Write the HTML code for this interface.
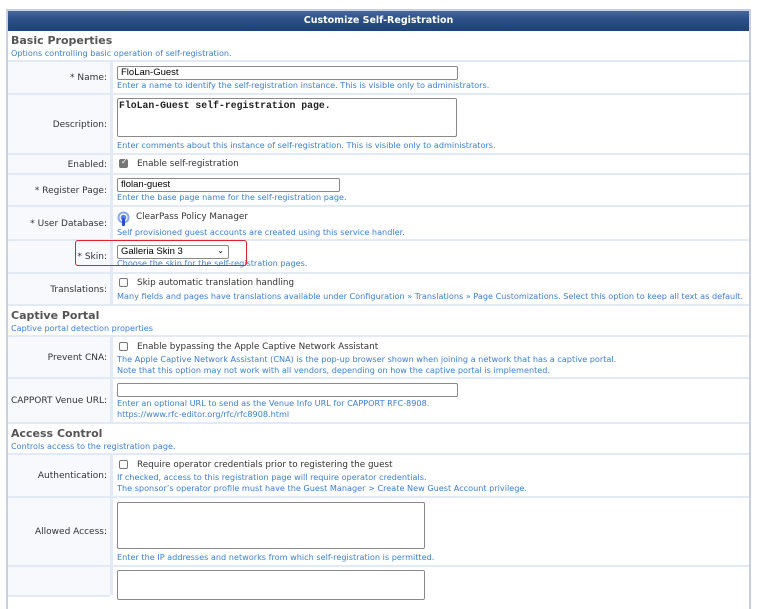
<!DOCTYPE html>
<html><head><style>
*{box-sizing:border-box;margin:0;padding:0}
body{width:768px;height:586px;background:#fff;position:relative;overflow:hidden;font-family:"DejaVu Sans",Verdana,sans-serif;color:#333}
.frame{position:absolute;left:6px;top:9px;width:745px;height:600px;border:2px solid #c8cfe0;border-bottom:none;background:#fff}
.hdr{position:absolute;left:8px;top:11px;width:741px;height:20px;background:linear-gradient(#45679a,#2d5088 40%,#1d4377);color:#fff;font-weight:bold;font-size:9.5px;text-align:center;line-height:20px}
.sec{position:absolute;left:8px;width:741px;background:#fff;border-bottom:2px solid #e2eaf8}
.sec b{position:absolute;left:3px;top:3px;font-size:11px;color:#555}
.sec i{position:absolute;left:3px;top:17px;font-style:normal;font-size:8.1px;color:#3a7fd5}
.lab{position:absolute;left:8px;width:102px;background:#f7f9fd;border-bottom:2px solid #e2eaf8;font-size:9px;color:#333;text-align:right;padding-right:3px;white-space:nowrap}
.val{position:absolute;left:113px;width:636px;background:#fff;border-bottom:2px solid #e2eaf8}
.t{position:absolute;font-size:8.8px;color:#333;white-space:nowrap}
.h{position:absolute;left:117px;font-size:8.15px;color:#3a7fd5;white-space:nowrap;line-height:11px}
.in{position:absolute;left:117px;border:1px solid #8a8a8a;border-radius:2px;background:#fff;font-family:"Liberation Sans",sans-serif;font-size:9.5px;color:#000;padding-left:3px;line-height:12px}
.ta{position:absolute;left:117px;border:1px solid #8a8a8a;border-radius:2px;background:#fff}
.cb{position:absolute;left:119px;width:9px;height:9px;border:1px solid #777;border-radius:2px;background:#fff}
.sep{position:absolute;left:110px;width:3px;background:#e2eaf8}
</style></head><body>
<div class="frame"></div>
<div class="hdr">Customize Self-Registration</div>

<div class="sec" style="top:31px;height:31px"><b>Basic Properties</b><i>Options controlling basic operation of self-registration.</i></div>

<div class="lab" style="top:62px;height:33px;line-height:33px">* Name:</div>
<div class="lab" style="top:95px;height:60px;line-height:60px">Description:</div>
<div class="lab" style="top:155px;height:20px;line-height:20px">Enabled:</div>
<div class="lab" style="top:175px;height:32px;line-height:32px">* Register Page:</div>
<div class="lab" style="top:207px;height:34px;line-height:34px">* User Database:</div>
<div class="lab" style="top:241px;height:33px;line-height:33px">* Skin:</div>
<div class="lab" style="top:274px;height:32px;line-height:32px">Translations:</div>
<div class="sep" style="top:62px;height:244px"></div>
<div class="val" style="top:62px;height:33px"></div>
<div class="val" style="top:95px;height:60px"></div>
<div class="val" style="top:155px;height:20px"></div>
<div class="val" style="top:175px;height:32px"></div>
<div class="val" style="top:207px;height:34px"></div>
<div class="val" style="top:241px;height:33px"></div>
<div class="val" style="top:274px;height:32px"></div>

<div class="in" style="top:66px;width:341px;height:14px">FloLan-Guest</div>
<div class="h" style="top:80px">Enter a name to identify the self-registration instance. This is visible only to administrators.</div>
<div class="ta" style="top:98px;width:340px;height:39px"><span style="position:absolute;left:1px;top:1px;font-family:'Liberation Mono',monospace;font-weight:bold;font-size:9.8px;color:#222">FloLan-Guest self-registration page.</span></div>
<div class="h" style="top:140px">Enter comments about this instance of self-registration. This is visible only to administrators.</div>
<div class="cb" style="top:159px;background:#777"><span style="position:absolute;left:1px;top:-3px;color:#fff;font-size:8px">✓</span></div>
<div class="t" style="left:137px;top:159px">Enable self-registration</div>
<div class="in" style="top:178px;width:223px;height:14px">flolan-guest</div>
<div class="h" style="top:192px">Enter the base page name for the self-registration page.</div>
<svg style="position:absolute;left:117px;top:211px" width="13" height="15" viewBox="0 0 13 15"><circle cx="6.5" cy="6.5" r="6" fill="#8aa8f0"/><circle cx="6.5" cy="6.5" r="4" fill="#fff"/><circle cx="6.5" cy="6.5" r="2.8" fill="#5a7ee8"/><rect x="5" y="7" width="3" height="8" rx="1" fill="#2a4fd0"/></svg>
<div class="t" style="left:136px;top:212px">ClearPass Policy Manager</div>
<div class="h" style="top:227px">Self provisioned guest accounts are created using this service handler.</div>
<div class="in" style="top:245px;width:112px;height:14px">Galleria Skin 3<span style="position:absolute;right:4px;top:-1px;font-size:8px">⌄</span></div>
<div class="h" style="top:258px">Choose the skin for the self-registration pages.</div>
<div style="position:absolute;left:75px;top:240px;width:172px;height:26px;border:1.5px solid #e0202a;border-radius:3px"></div>
<div class="cb" style="top:278px"></div>
<div class="t" style="left:137px;top:278px">Skip automatic translation handling</div>
<div class="h" style="top:291px">Many fields and pages have translations available under Configuration » Translations » Page Customizations. Select this option to keep all text as default.</div>

<div class="sec" style="top:306px;height:31px"><b>Captive Portal</b><i>Captive portal detection properties</i></div>
<div class="lab" style="top:337px;height:42px;line-height:42px">Prevent CNA:</div>
<div class="lab" style="top:379px;height:45px;line-height:45px">CAPPORT Venue URL:</div>
<div class="sep" style="top:337px;height:87px"></div>
<div class="val" style="top:337px;height:42px"></div>
<div class="val" style="top:379px;height:45px"></div>
<div class="cb" style="top:342px"></div>
<div class="t" style="left:137px;top:342px">Enable bypassing the Apple Captive Network Assistant</div>
<div class="h" style="top:354px">The Apple Captive Network Assistant (CNA) is the pop-up browser shown when joining a network that has a captive portal.</div>
<div class="h" style="top:365px">Note that this option may not work with all vendors, depending on how the captive portal is implemented.</div>
<div class="in" style="top:383px;width:341px;height:14px"></div>
<div class="h" style="top:398px">Enter an optional URL to send as the Venue Info URL for CAPPORT RFC-8908.</div>
<div class="h" style="top:409px">https://www.rfc-editor.org/rfc/rfc8908.html</div>

<div class="sec" style="top:424px;height:31px"><b>Access Control</b><i>Controls access to the registration page.</i></div>
<div class="lab" style="top:455px;height:43px;line-height:43px">Authentication:</div>
<div class="lab" style="top:498px;height:69px;line-height:69px">Allowed Access:</div>
<div class="lab" style="top:567px;height:30px"></div>
<div class="sep" style="top:455px;height:140px"></div>
<div class="val" style="top:455px;height:43px"></div>
<div class="val" style="top:498px;height:69px"></div>
<div class="val" style="top:567px;height:30px;border:none"></div>
<div class="cb" style="top:460px"></div>
<div class="t" style="left:137px;top:460px">Require operator credentials prior to registering the guest</div>
<div class="h" style="top:472px">If checked, access to this registration page will require operator credentials.</div>
<div class="h" style="top:483px">The sponsor’s operator profile must have the Guest Manager &gt; Create New Guest Account privilege.</div>
<div class="ta" style="top:502px;width:308px;height:47px"></div>
<div class="h" style="top:552px">Enter the IP addresses and networks from which self-registration is permitted.</div>
<div class="ta" style="top:570px;width:308px;height:30px"></div>
</body></html>
